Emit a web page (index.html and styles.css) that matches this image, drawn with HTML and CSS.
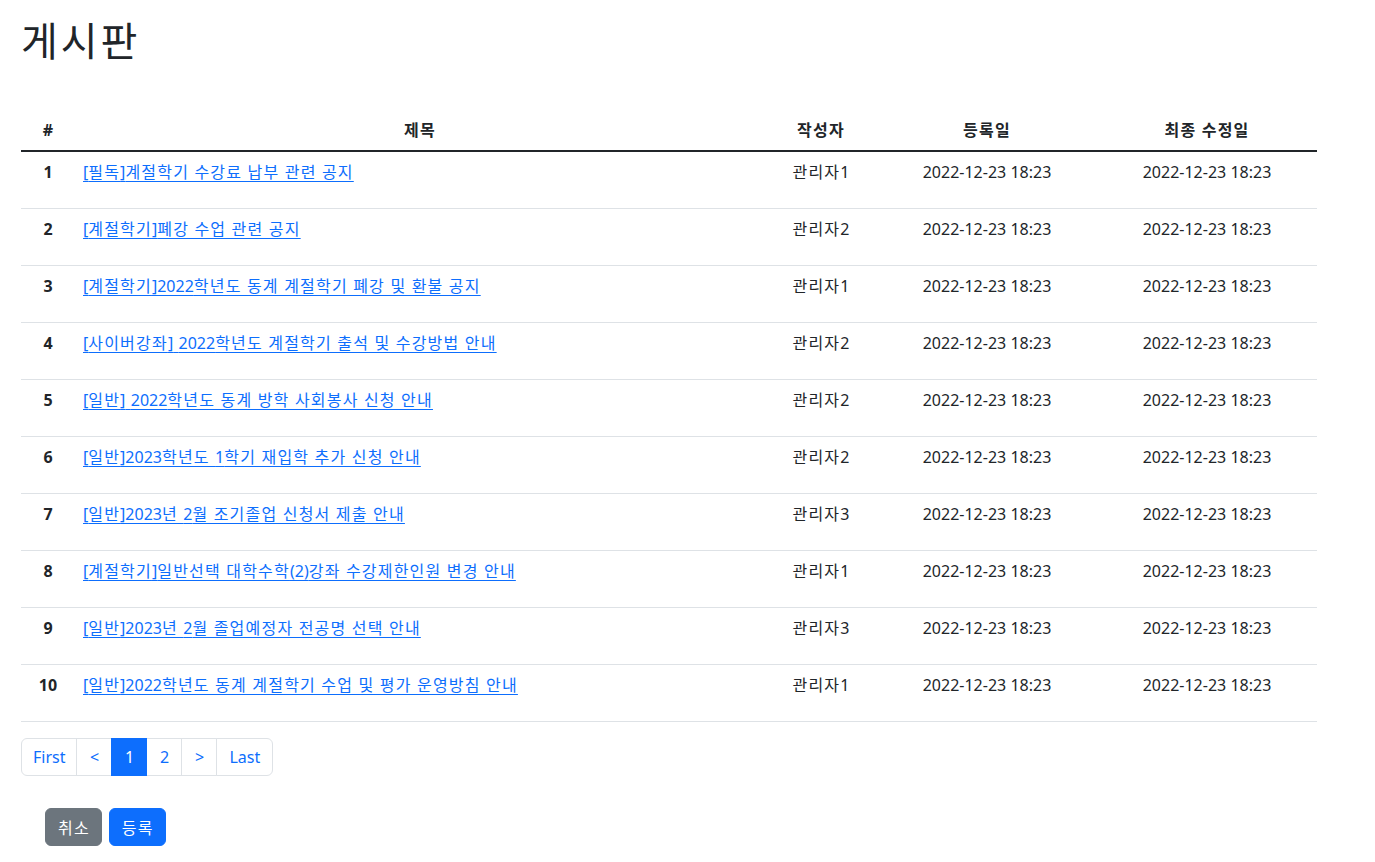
FILE: index.html
```html
<!DOCTYPE html>
<html lang="ko">
<head>
<meta charset="utf-8">
<title>게시판</title>
<link rel="stylesheet" href="styles.css">
</head>
<body>
<div class="page">
  <h1 class="title">게시판</h1>
  <table class="board">
    <colgroup>
      <col class="c-num"><col class="c-title"><col class="c-writer"><col class="c-date"><col class="c-date">
    </colgroup>
    <thead>
      <tr><th>#</th><th><span class="k">제목</span></th><th><span class="k">작성자</span></th><th><span class="k">등록일</span></th><th><span class="k">최종 수정일</span></th></tr>
    </thead>
    <tbody>
      <tr><th>1</th><td class="subject"><a href="#">[<span class="k">필독</span>]<span class="k">계절학기 수강료 납부 관련 공지</span></a></td><td><span class="k">관리자</span>1</td><td>2022-12-23 18:23</td><td>2022-12-23 18:23</td></tr>
      <tr><th>2</th><td class="subject"><a href="#">[<span class="k">계절학기</span>]<span class="k">폐강 수업 관련 공지</span></a></td><td><span class="k">관리자</span>2</td><td>2022-12-23 18:23</td><td>2022-12-23 18:23</td></tr>
      <tr><th>3</th><td class="subject"><a href="#">[<span class="k">계절학기</span>]2022<span class="k">학년도 동계 계절학기 폐강 및 환불 공지</span></a></td><td><span class="k">관리자</span>1</td><td>2022-12-23 18:23</td><td>2022-12-23 18:23</td></tr>
      <tr><th>4</th><td class="subject"><a href="#">[<span class="k">사이버강좌</span>]<span class="k"> </span>2022<span class="k">학년도 계절학기 출석 및 수강방법 안내</span></a></td><td><span class="k">관리자</span>2</td><td>2022-12-23 18:23</td><td>2022-12-23 18:23</td></tr>
      <tr><th>5</th><td class="subject"><a href="#">[<span class="k">일반</span>]<span class="k"> </span>2022<span class="k">학년도 동계 방학 사회봉사 신청 안내</span></a></td><td><span class="k">관리자</span>2</td><td>2022-12-23 18:23</td><td>2022-12-23 18:23</td></tr>
      <tr><th>6</th><td class="subject"><a href="#">[<span class="k">일반</span>]2023<span class="k">학년도 </span>1<span class="k">학기 재입학 추가 신청 안내</span></a></td><td><span class="k">관리자</span>2</td><td>2022-12-23 18:23</td><td>2022-12-23 18:23</td></tr>
      <tr><th>7</th><td class="subject"><a href="#">[<span class="k">일반</span>]2023<span class="k">년 </span>2<span class="k">월 조기졸업 신청서 제출 안내</span></a></td><td><span class="k">관리자</span>3</td><td>2022-12-23 18:23</td><td>2022-12-23 18:23</td></tr>
      <tr><th>8</th><td class="subject"><a href="#">[<span class="k">계절학기</span>]<span class="k">일반선택 대학수학</span>(2)<span class="k">강좌 수강제한인원 변경 안내</span></a></td><td><span class="k">관리자</span>1</td><td>2022-12-23 18:23</td><td>2022-12-23 18:23</td></tr>
      <tr><th>9</th><td class="subject"><a href="#">[<span class="k">일반</span>]2023<span class="k">년 </span>2<span class="k">월 졸업예정자 전공명 선택 안내</span></a></td><td><span class="k">관리자</span>3</td><td>2022-12-23 18:23</td><td>2022-12-23 18:23</td></tr>
      <tr><th>10</th><td class="subject"><a href="#">[<span class="k">일반</span>]2022<span class="k">학년도 동계 계절학기 수업 및 평가 운영방침 안내</span></a></td><td><span class="k">관리자</span>1</td><td>2022-12-23 18:23</td><td>2022-12-23 18:23</td></tr>
    </tbody>
  </table>
  <ul class="pagination">
    <li><a class="page-link first" href="#">First</a></li>
    <li><a class="page-link" href="#">&lt;</a></li>
    <li><a class="page-link active" href="#">1</a></li>
    <li><a class="page-link" href="#">2</a></li>
    <li><a class="page-link" href="#">&gt;</a></li>
    <li><a class="page-link last" href="#">Last</a></li>
  </ul>
  <div class="actions">
    <button class="btn btn-secondary" type="button"><span class="k">취소</span></button>
    <button class="btn btn-primary" type="button"><span class="k">등록</span></button>
  </div>
</div>
</body>
</html>
```

FILE: styles.css
```css
* { box-sizing: border-box; }
html, body {
  margin: 0;
  padding: 0;
  background: #fff;
}
body {
  font-family: "Noto Sans", "Noto Sans CJK KR", sans-serif;
  font-size: 16px;
  line-height: 24px;
  color: #212529;
}
.k {
  letter-spacing: 1.2px;
}
.page {
  padding: 15px 21px 0 21px;
}
.title {
  margin: 0 0 47px 0;
  font-size: 40px;
  line-height: 48px;
  font-weight: 400;
  letter-spacing: 3px;
  font-family: "Noto Sans CJK KR", sans-serif;
}
.board {
  width: 1296px;
  border-collapse: collapse;
  table-layout: fixed;
  margin-bottom: 16px;
}
.c-num { width: 54px; }
.c-title { width: 690px; }
.c-writer { width: 112px; }
.c-date { width: 220px; }
.board thead th {
  padding: 8px;
  font-weight: 700;
  text-align: center;
  border-bottom: 2px solid #212529;
  font-size: 16px;
}
.board tbody th,
.board tbody td {
  padding: 8px 8px 24px 8px;
  text-align: center;
  border-bottom: 1px solid #dee2e6;
  font-weight: 400;
  vertical-align: top;
}
.board tbody th {
  font-weight: 700;
}
.board tbody td.subject {
  text-align: left;
}
.board a {
  color: #0d6efd;
  text-decoration: underline;
  text-underline-offset: 3px;
}
.pagination {
  display: flex;
  list-style: none;
  margin: 0;
  padding: 0;
}
.pagination li + li {
  margin-left: -1px;
}
.page-link {
  display: block;
  min-width: 36px;
  text-align: center;
  padding: 6px 12px;
  line-height: 24px;
  color: #0d6efd;
  text-decoration: none;
  background: #fff;
  border: 1px solid #dee2e6;
}
.page-link.first {
  padding: 6px 11px;
  border-radius: 6px 0 0 6px;
}
.page-link.last {
  border-radius: 0 6px 6px 0;
}
.page-link.active {
  background: #0d6efd;
  border-color: #0d6efd;
  color: #fff;
  position: relative;
}
.actions {
  display: flex;
  gap: 7px;
  margin: 32px 0 0 24px;
}
.btn {
  font-family: "Noto Sans CJK KR", sans-serif;
  font-size: 16px;
  line-height: 24px;
  padding: 6px 11px 6px 12px;
  border: 1px solid transparent;
  border-radius: 6px;
  color: #fff;
  cursor: pointer;
}
.btn-secondary {
  background: #6c757d;
  border-color: #6c757d;
}
.btn-primary {
  background: #0d6efd;
  border-color: #0d6efd;
}
```
